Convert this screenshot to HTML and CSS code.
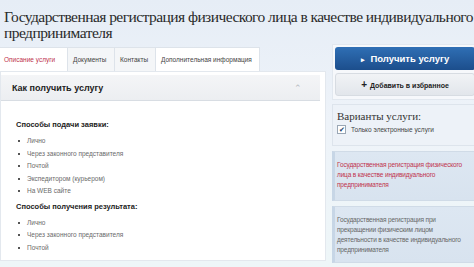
FILE: index.html
```html
<!DOCTYPE html>
<html>
<head>
    <meta charset="UTF-8">
    <title>Государственная регистрация</title>
    <link rel="stylesheet" href="styles.css">
</head>
<body>
    <h1 class="page-title">Государственная регистрация физического лица в качестве индивидуального предпринимателя</h1>

    <div class="layout">
        <div class="main">
            <div class="tabs">
                <div class="tab active">Описание услуги</div>
                <div class="tab">Документы</div>
                <div class="tab">Контакты</div>
                <div class="tab">Дополнительная информация</div>
            </div>
            <div class="panel">
                <div class="panel-head">
                    <span>Как получить услугу</span>
                    <span class="chevron">&#8963;</span>
                </div>
                <div class="panel-body">
                    <h3>Способы подачи заявки:</h3>
                    <ul>
                        <li>Лично</li>
                        <li>Через законного представителя</li>
                        <li>Почтой</li>
                        <li>Экспедитором (курьером)</li>
                        <li>На WEB сайте</li>
                    </ul>
                    <h3>Способы получения результата:</h3>
                    <ul>
                        <li>Лично</li>
                        <li>Через законного представителя</li>
                        <li>Почтой</li>
                    </ul>
                </div>
            </div>
        </div>

        <div class="side">
            <div class="actions">
                <button class="btn-primary"><span class="arrow">&#9656;</span> Получить услугу</button>
                <button class="btn-secondary"><span class="plus">+</span> Добавить в избранное</button>
            </div>
            <div class="variants">
                <div class="variants-title">Варианты услуги:</div>
                <label class="check"><span class="box">&#10004;</span> Только электронные услуги</label>
            </div>
            <div class="variant-card current">Государственная регистрация физического лица в качестве индивидуального предпринимателя</div>
            <div class="variant-card">Государственная регистрация при прекращении физическим лицом деятельности в качестве индивидуального предпринимателя</div>
        </div>
    </div>
</body>
</html>
```

FILE: styles.css
```css
* {
    box-sizing: border-box;
    margin: 0;
    padding: 0;
}
body {
    font-family: "Liberation Sans", Arial, sans-serif;
    background: linear-gradient(#e6edf6, #eef3f9 120px, #eef6f8);
    color: #333;
    width: 474px;
    height: 267px;
    overflow: hidden;
}
.page-title {
    font-family: "Liberation Serif", "Times New Roman", serif;
    font-weight: normal;
    font-size: 15.5px;
    line-height: 16px;
    letter-spacing: -0.55px;
    color: #2a2a2a;
    padding: 9px 0 0 4px;
    height: 44px;
}
.layout {
    display: flex;
    gap: 6px;
}
.main {
    width: 326px;
    margin-top: 3px;
}
.tabs {
    display: flex;
    height: 24px;
}
.tab {
    font-size: 6.5px;
    color: #444;
    padding: 0 5px;
    display: flex;
    align-items: center;
    border: 1px solid #dde3ea;
    border-bottom: none;
    border-left: none;
    background: #f4f6f8;
}
.tab.active {
    background: #fff;
    color: #c0334d;
    padding: 0 4px;
    width: 68px;
}
.tab:nth-child(2) { width: 47px; }
.tab:nth-child(3) { width: 41px; }
.tab:nth-child(4) { width: 104px; background: #fff; }
.panel {
    background: #fff;
    border: 1px solid #e3e8ee;
    height: 190px;
    padding: 3px 5px 0 0;
}
.panel-head {
    display: flex;
    justify-content: space-between;
    align-items: center;
    height: 26px;
    padding: 0 18px 0 11px;
    background: linear-gradient(#f4f5f7, #eceef1);
    border-bottom: 1px solid #d8dde3;
    font-size: 9px;
    font-weight: bold;
    color: #222;
}
.chevron {
    color: #b5b9be;
    font-size: 9px;
    font-weight: normal;
}
.panel-body {
    padding: 19px 0 0 15px;
}
.panel-body h3 {
    font-size: 7.5px;
    color: #222;
    margin-bottom: 6px;
}
.panel-body ul {
    list-style: none;
    margin-bottom: 4px;
}
.panel-body li {
    font-size: 6.5px;
    color: #6a6a6a;
    line-height: 12.5px;
    padding-left: 11px;
    position: relative;
}
.panel-body li::before {
    content: "";
    position: absolute;
    left: 2px;
    top: 5px;
    width: 2px;
    height: 2px;
    background: #555;
}
.side {
    width: 142px;
    display: flex;
    flex-direction: column;
}
.actions {
    background: #f6f8fb;
    border: 1px solid #e2e8ef;
    border-right: none;
    padding: 2px 0 3px 2px;
    display: flex;
    flex-direction: column;
    gap: 3px;
}
button {
    font-family: "Liberation Sans", Arial, sans-serif;
    border: none;
    border-radius: 3px;
    cursor: pointer;
    height: 23px;
    width: 140px;
    font-weight: bold;
}
.btn-primary {
    background: linear-gradient(#2f6fb5, #1c4e8c);
    color: #fff;
    font-size: 9.5px;
}
.btn-primary .arrow {
    font-size: 7px;
    margin-right: 3px;
}
.btn-secondary {
    background: linear-gradient(#f1f3f6, #e2e6eb);
    color: #222;
    font-size: 7px;
    border: 1px solid #d7dce2;
}
.btn-secondary .plus {
    font-size: 10px;
    margin-right: 1px;
}
.variants {
    margin-top: 4px;
    background: #edf2f8;
    border: 1px solid #dde4ec;
    border-right: none;
    padding: 5px 0 0 4px;
    height: 42px;
}
.variants-title {
    font-family: "Liberation Serif", "Times New Roman", serif;
    font-size: 11px;
    color: #333;
    margin-bottom: 3px;
}
.check {
    display: flex;
    align-items: center;
    font-size: 6.5px;
    color: #444;
}
.check .box {
    width: 9px;
    height: 9px;
    border: 1px solid #9aa7b5;
    background: #fff;
    font-size: 7px;
    line-height: 7px;
    text-align: center;
    color: #1a3d6a;
    margin-right: 5px;
}
.variant-card {
    margin-top: 5px;
    background: linear-gradient(#dde7f2, #d8e3ef);
    border: 1px solid #d0dbe7;
    border-left: 3px solid #c7d6e6;
    border-right: none;
    padding: 8px 4px 8px 2px;
    font-size: 6.5px;
    letter-spacing: -0.15px;
    line-height: 10px;
    color: #666;
}
.variant-card.current {
    color: #c0334d;
    height: 50px;
}
.variant-card:last-child {
    height: 57px;
}
```
